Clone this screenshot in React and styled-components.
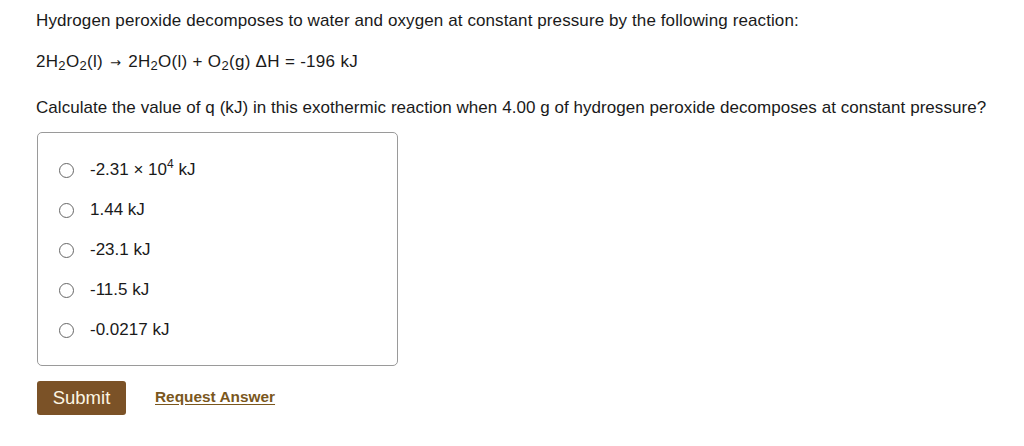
import React, { useState } from "react";
import styled, { createGlobalStyle } from "styled-components";

const GlobalStyle = createGlobalStyle`
  body {
    margin: 0;
    background: #ffffff;
    font-family: "Liberation Sans", Arial, Helvetica, sans-serif;
    color: #1a1a1a;
  }
`;

const Page = styled.div`
  padding: 11px 36px 0 36px;
`;

const Text = styled.p`
  margin: 0;
  font-size: 17px;
  letter-spacing: 0.1px;
  line-height: 20px;
  white-space: nowrap;
`;

const Equation = styled(Text)`
  margin-top: 21px;
  letter-spacing: 0.3px;
`;

const Question = styled(Text)`
  margin-top: 25px;
  letter-spacing: 0.05px;
`;

const Sub = styled.sub`
  font-size: 13px;
  line-height: 0;
  vertical-align: -3px;
`;

const Sup = styled.sup`
  font-size: 12px;
  line-height: 0;
  vertical-align: 7px;
`;

const Arrow = styled.span`
  font-family: "DejaVu Sans", sans-serif;
  font-size: 13px;
  margin: 0 2px;
`;

const ChoiceBox = styled.div`
  margin-top: 14px;
  margin-left: 1px;
  box-sizing: border-box;
  width: 361px;
  height: 234px;
  border: 1px solid #9a9a9a;
  border-radius: 5px;
  padding-top: 17px;
  display: flex;
  flex-direction: column;
`;

const Choice = styled.label`
  display: flex;
  align-items: center;
  height: 40px;
  padding-left: 21px;
  cursor: pointer;
`;

const Radio = styled.span`
  width: 13px;
  height: 13px;
  border: 1px solid #666666;
  border-radius: 50%;
  flex-shrink: 0;
  background: ${(p) =>
    p.$checked ? "radial-gradient(#5a5a5a 35%, #fff 40%)" : "#fff"};
`;

const ChoiceLabel = styled.span`
  margin-left: 16px;
  font-size: 17px;
`;

const Actions = styled.div`
  margin-top: 15px;
  margin-left: 1px;
  display: flex;
  align-items: center;
  gap: 29px;
`;

const SubmitButton = styled.button`
  width: 89px;
  height: 34px;
  border: none;
  border-radius: 3px;
  background: #7b5227;
  color: #fdf6e3;
  font-family: "Liberation Sans", Arial, sans-serif;
  font-size: 18.5px;
  cursor: pointer;
`;

const RequestLink = styled.a`
  color: #7a571d;
  font-weight: bold;
  font-size: 15.4px;
  text-decoration: underline;
  text-underline-offset: 2px;
  margin-top: -3px;
`;

const options = [
  { id: "a", label: (<>-2.31 × 10<Sup>4</Sup> kJ</>) },
  { id: "b", label: "1.44 kJ" },
  { id: "c", label: "-23.1 kJ" },
  { id: "d", label: "-11.5 kJ" },
  { id: "e", label: "-0.0217 kJ" },
];

const App = () => {
  const [picked, setPicked] = useState(null);

  return (
    <Page>
      <GlobalStyle />
      <Text>
        Hydrogen peroxide decomposes to water and oxygen at constant pressure by
        the following reaction:
      </Text>
      <Equation>
        2H<Sub>2</Sub>O<Sub>2</Sub>(l) <Arrow>→</Arrow> 2H<Sub>2</Sub>O(l) + O
        <Sub>2</Sub>(g) ΔH = -196 kJ
      </Equation>
      <Question>
        Calculate the value of q (kJ) in this exothermic reaction when 4.00 g of
        hydrogen peroxide decomposes at constant pressure?
      </Question>
      <ChoiceBox>
        {options.map((o) => (
          <Choice key={o.id} onClick={() => setPicked(o.id)}>
            <Radio $checked={picked === o.id} />
            <ChoiceLabel>{o.label}</ChoiceLabel>
          </Choice>
        ))}
      </ChoiceBox>
      <Actions>
        <SubmitButton>Submit</SubmitButton>
        <RequestLink href="#">Request Answer</RequestLink>
      </Actions>
    </Page>
  );
};

export default App;
